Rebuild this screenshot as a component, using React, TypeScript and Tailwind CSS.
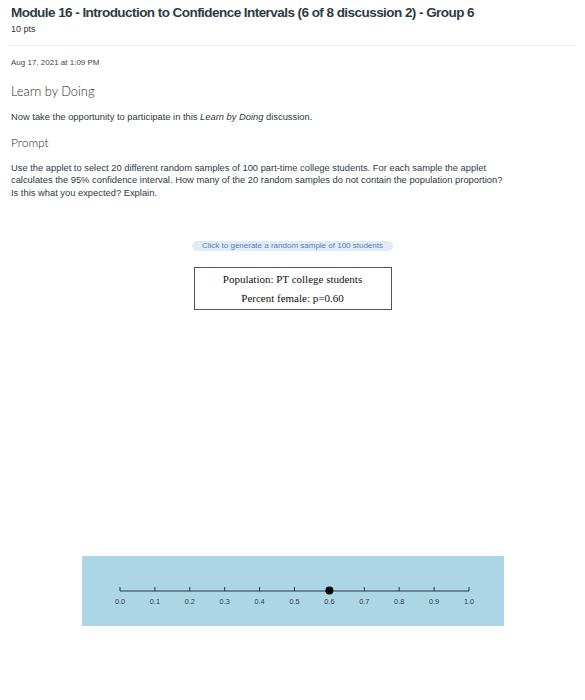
import React from "react";

const ticks = [0, 0.1, 0.2, 0.3, 0.4, 0.5, 0.6, 0.7, 0.8, 0.9, 1.0];

export default function App() {
  return (
    <main
      className="min-h-[700px] w-[585px] bg-white text-[#2d3b45]"
      style={{ fontFamily: "'Liberation Sans', 'Helvetica Neue', Arial, sans-serif" }}
    >
      {/* Header */}
      <div className="px-[11px] pt-[4px]">
        <h1 className="text-[13.5px] font-bold leading-[18px] tracking-[-0.55px]">
          Module 16 - Introduction to Confidence Intervals (6 of 8 discussion 2) - Group 6
        </h1>
        <p className="mt-[1px] text-[9px] leading-[12px] text-[#333]">10 pts</p>
      </div>
      <div className="mx-[10px] mt-[10px] h-px bg-[#ececec]" />

      {/* Body */}
      <div className="px-[11px] text-[#2d3b45]">
        <p className="mt-[12px] text-[8px] leading-[10px] text-[#444]">Aug 17, 2021 at 1:09 PM</p>
        <h2
          className="mt-[14px] text-[12.8px] font-light leading-[18px] text-[#2d2d2d]"
          style={{ fontFamily: "Lato, 'Liberation Sans', sans-serif" }}
        >
          Learn by Doing
        </h2>
        <p className="mt-[12px] text-[9.35px] leading-[11px]">
          Now take the opportunity to participate in this <em>Learn by Doing</em> discussion.
        </p>
        <h3
          className="mt-[12.5px] text-[12px] font-light leading-[14px] text-[#2d2d2d]"
          style={{ fontFamily: "Lato, 'Liberation Sans', sans-serif" }}
        >
          Prompt
        </h3>
        <p className="mt-[12px] text-[9.35px] leading-[12.5px]">
          Use the applet to select 20 different random samples of 100 part-time college students. For each sample the applet
          <br />
          calculates the 95% confidence interval. How many of the 20 random samples do not contain the population proportion?
          <br />
          Is this what you expected? Explain.
        </p>
      </div>

      {/* Applet */}
      <div className="mt-[42px] flex flex-col items-center">
        <button className="flex h-[10px] w-[201px] items-center justify-center whitespace-nowrap rounded-full bg-[#e3eaf3] text-[8px] leading-[10px] text-[#4f82c4]">
          Click to generate a random sample of 100 students
        </button>
        <div
          className="mt-[16px] flex h-[43px] w-[198px] flex-col items-center justify-center gap-[7px] border border-[#555] text-[11px] leading-[12px] text-[#111]"
          style={{ fontFamily: "'Liberation Serif', 'Times New Roman', serif" }}
        >
          <span>Population: PT college students</span>
          <span>Percent female: p=0.60</span>
        </div>

        <div className="mt-[246px] h-[70px] w-[422px] bg-[#acd6e6]">
          <svg width="422" height="70" viewBox="0 0 422 70">
            <line x1="38" y1="35" x2="387" y2="35" stroke="#23374a" strokeWidth="1.2" />
            {ticks.map((t, i) => {
              const x = 38 + i * 34.9;
              return (
                <g key={i}>
                  <line x1={x} y1="31" x2={x} y2="35" stroke="#23374a" strokeWidth="1" />
                  <text
                    x={x}
                    y="48"
                    textAnchor="middle"
                    fontSize="7.3"
                    fill="#2d3b45"
                    fontFamily="'Liberation Sans', Arial, sans-serif"
                  >
                    {t.toFixed(1)}
                  </text>
                </g>
              );
            })}
            <circle cx={38 + 6 * 34.9} cy="34.5" r="4" fill="#000" />
          </svg>
        </div>
      </div>
    </main>
  );
}
